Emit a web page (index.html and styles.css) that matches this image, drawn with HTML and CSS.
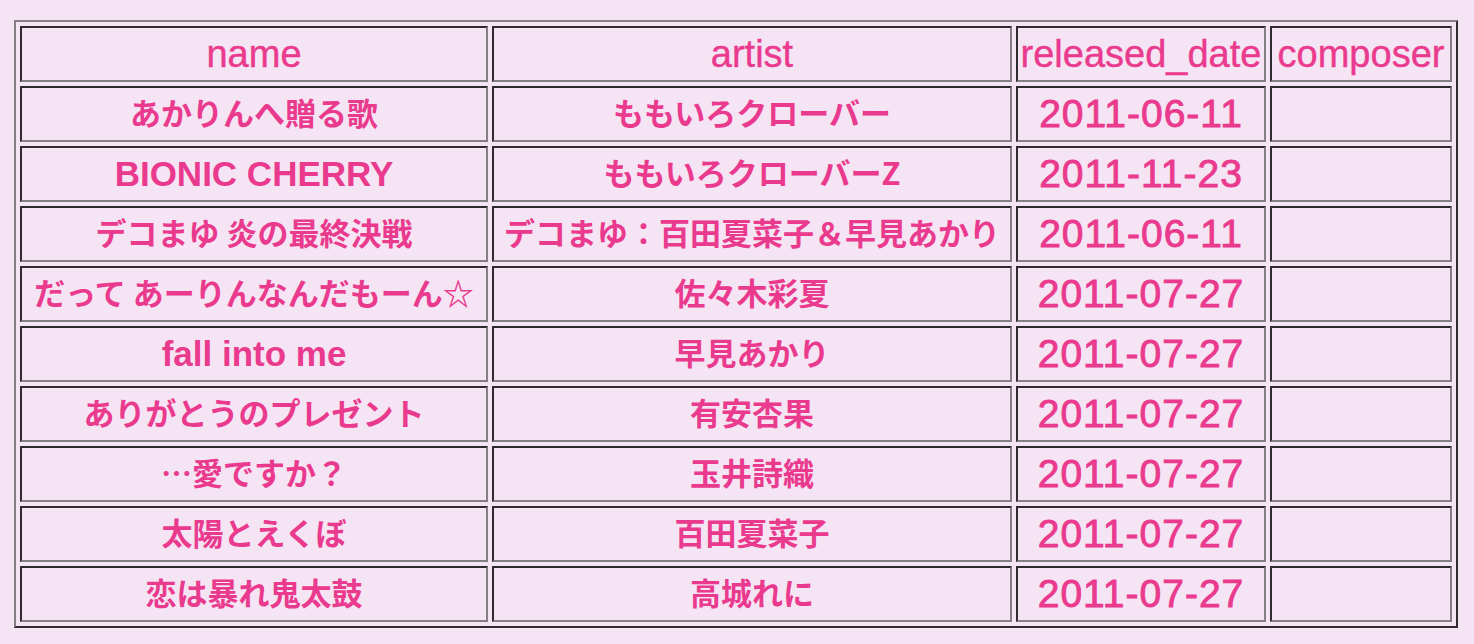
FILE: index.html
```html
<!DOCTYPE html>
<html lang="ja">
<head>
<meta charset="utf-8">
<title>songs</title>
<link rel="stylesheet" href="styles.css">
</head>
<body>
<table class="songs">
  <tr>
    <th class="c1">name</th>
    <th class="c2">artist</th>
    <th class="c3">released_date</th>
    <th class="c4">composer</th>
  </tr>
  <tr><td>あかりんへ贈る歌</td><td>ももいろクローバー</td><td class="date">2011-06-11</td><td></td></tr>
  <tr><td class="lat">BIONIC CHERRY</td><td>ももいろクローバーZ</td><td class="date">2011-11-23</td><td></td></tr>
  <tr><td>デコまゆ 炎の最終決戦</td><td>デコまゆ：百田夏菜子＆早見あかり</td><td class="date">2011-06-11</td><td></td></tr>
  <tr><td>だって あーりんなんだもーん☆</td><td>佐々木彩夏</td><td class="date">2011-07-27</td><td></td></tr>
  <tr><td class="lat">fall into me</td><td>早見あかり</td><td class="date">2011-07-27</td><td></td></tr>
  <tr><td>ありがとうのプレゼント</td><td>有安杏果</td><td class="date">2011-07-27</td><td></td></tr>
  <tr><td>…愛ですか？</td><td>玉井詩織</td><td class="date">2011-07-27</td><td></td></tr>
  <tr><td>太陽とえくぼ</td><td>百田夏菜子</td><td class="date">2011-07-27</td><td></td></tr>
  <tr><td>恋は暴れ鬼太鼓</td><td>高城れに</td><td class="date">2011-07-27</td><td></td></tr>
</table>
</body>
</html>
```
FILE: styles.css
```css
html {
  background: #f5e4f4;
}
body {
  margin: 20px 0 0 14px;
  background: #f5e4f4;
  color: #ea3a8e;
  font-family: "Liberation Sans", "Noto Sans CJK JP", sans-serif;
}
.songs {
  border-collapse: separate;
  border-spacing: 4px;
  border-width: 2px;
  border-style: solid;
  border-color: #837e83 #2e2a2f #2e2a2f #837e83;
}
.songs th,
.songs td {
  box-sizing: border-box;
  height: 56px;
  padding: 0 2px;
  text-align: center;
  vertical-align: middle;
  white-space: nowrap;
  border-width: 2px;
  border-style: solid;
  border-color: #2e2a2f #837e83 #837e83 #2e2a2f;
}
.songs th {
  font-family: "Liberation Sans", sans-serif;
  font-weight: normal;
  font-size: 38px;
  -webkit-text-stroke: 0.4px #ea3a8e;
}
.songs td {
  font-family: "Noto Sans CJK JP", sans-serif;
  font-weight: bold;
  font-size: 31px;
  padding-bottom: 5px;
}
.songs td.lat {
  font-family: "Liberation Sans", sans-serif;
  font-size: 35px;
  padding-bottom: 0;
}
.songs td.date {
  font-family: "Liberation Sans", sans-serif;
  font-size: 39px;
  font-weight: normal;
  letter-spacing: 1px;
  -webkit-text-stroke: 0.9px #ea3a8e;
  padding-bottom: 0;
}
.c1 { width: 468px; }
.c2 { width: 520px; }
.c3 { width: 250px; }
.c4 { width: 182px; }
```
